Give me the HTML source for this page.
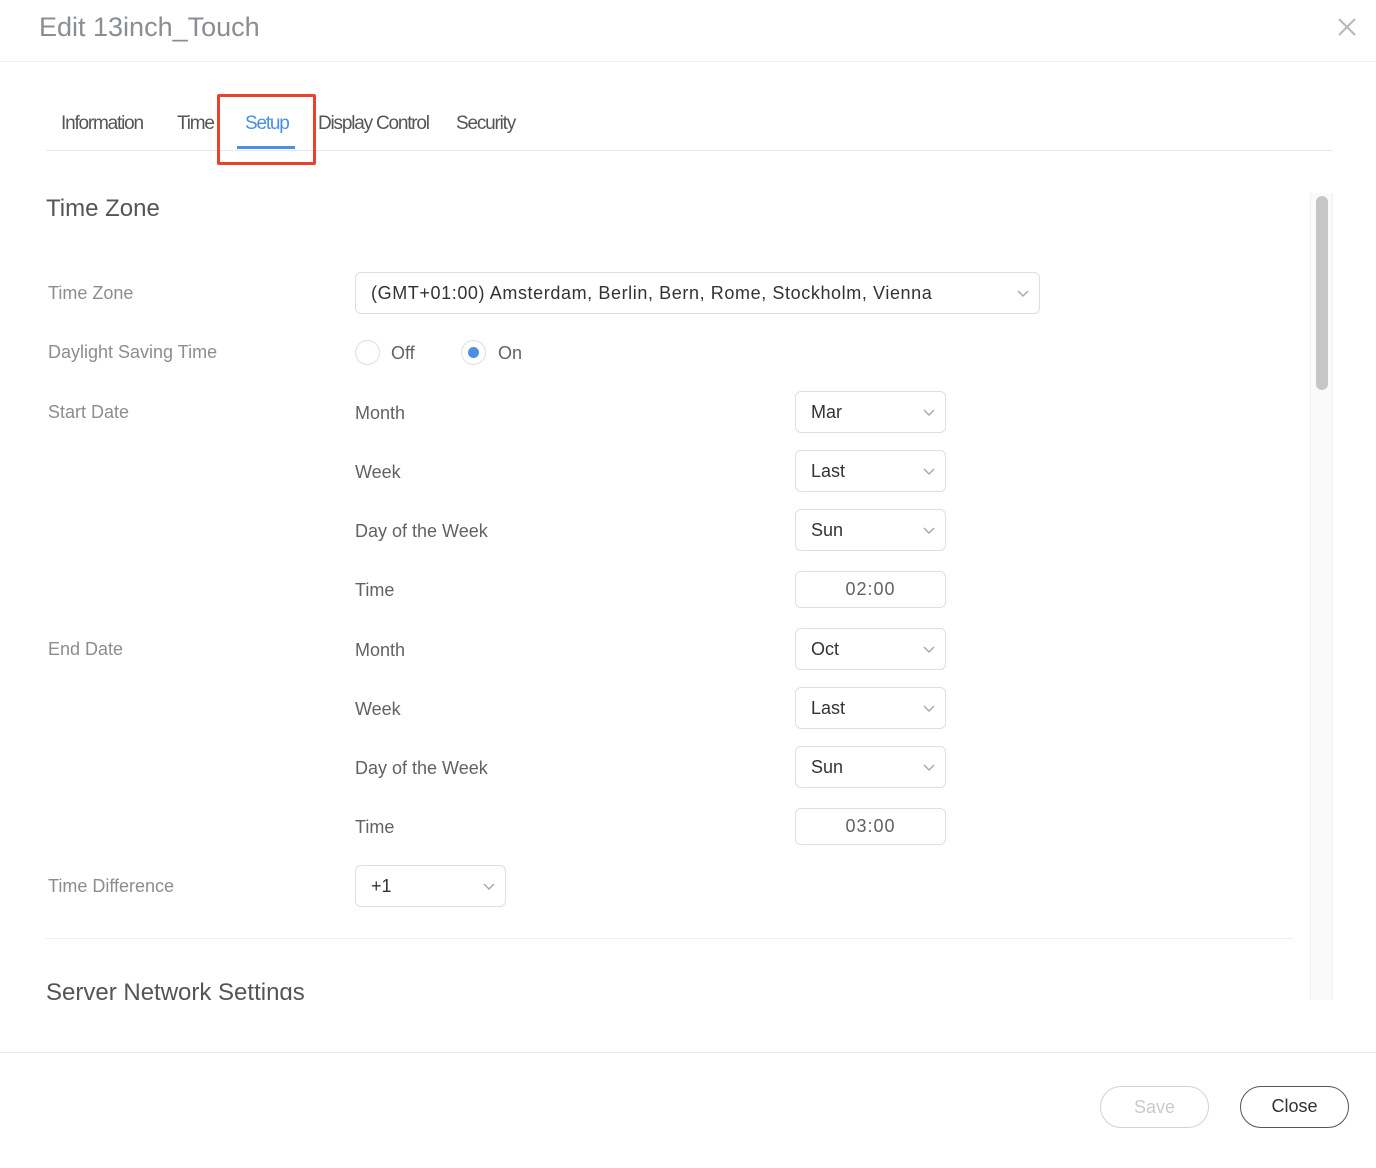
<!DOCTYPE html>
<html><head><meta charset="utf-8"><style>
*{box-sizing:border-box;margin:0;padding:0}
body{width:1376px;height:1168px;background:#fff;font-family:"Liberation Sans",sans-serif;position:relative;overflow:hidden;color:#555}
.a{position:absolute}
.lbl{position:absolute;font-size:18px;color:#8a8d91;line-height:20px}
.sub{position:absolute;left:355px;font-size:18px;color:#606266;line-height:20px}
.sel{position:absolute;left:795px;width:151px;height:42px;border:1px solid #dcdfe6;border-radius:6px;font-size:18px;color:#333;padding-left:15px;line-height:40px}
.sel svg,.tz svg{position:absolute;right:10px;top:17px}
.inp{position:absolute;left:795px;width:151px;height:37px;border:1px solid #dcdfe6;border-radius:6px;font-size:18px;color:#606266;text-align:center;line-height:35px;letter-spacing:1px}
.tab{position:absolute;top:113px;font-size:19px;color:#555;letter-spacing:-1.2px}
</style></head><body>
<div class="a" style="left:39px;top:12px;font-size:27px;color:#8a8d91">Edit 13inch_Touch</div>
<svg class="a" style="left:1338px;top:18px" width="18" height="18"><path d="M1 1L17 17M17 1L1 17" stroke="#b5b8bc" stroke-width="2"/></svg>
<div class="a" style="left:0;top:61px;width:1376px;height:1px;background:#f0f1f3"></div>

<div class="tab" style="left:61px">Information</div>
<div class="tab" style="left:177px">Time</div>
<div class="tab" style="left:245px;color:#4a90e2">Setup</div>
<div class="tab" style="left:318px">Display Control</div>
<div class="tab" style="left:456px">Security</div>
<div class="a" style="left:46px;top:150px;width:1286px;height:1px;background:#e4e7ed"></div>
<div class="a" style="left:237px;top:146px;width:58px;height:3px;background:#4a90e2"></div>
<div class="a" style="left:217px;top:94px;width:99px;height:71px;border:3px solid #e8412c;border-radius:2px"></div>

<div class="a" style="left:1310px;top:193px;width:23px;height:807px;background:#fafafa;border-left:1px solid #eef0f2;border-right:1px solid #eef0f2"></div>
<div class="a" style="left:1316px;top:196px;width:12px;height:194px;background:#c4c6c8;border-radius:6px"></div>

<div class="a" style="left:46px;top:195px;font-size:24px;color:#555">Time Zone</div>

<div class="lbl" style="left:48px;top:283px">Time Zone</div>
<div class="tz a" style="left:355px;top:272px;width:685px;height:42px;border:1px solid #dcdfe6;border-radius:6px;font-size:18px;color:#333;padding-left:15px;line-height:40px;letter-spacing:0.6px">(GMT+01:00) Amsterdam, Berlin, Bern, Rome, Stockholm, Vienna<svg width="12" height="8"><path d="M1 1L6 6L11 1" stroke="#aaa" fill="none" stroke-width="1.5"/></svg></div>

<div class="lbl" style="left:48px;top:342px">Daylight Saving Time</div>
<div class="a" style="left:355px;top:340px;width:25px;height:25px;border:1px solid #dcdfe6;border-radius:50%"></div>
<div class="a" style="left:391px;top:343px;font-size:18px;color:#606266">Off</div>
<div class="a" style="left:461px;top:340px;width:25px;height:25px;border:1px solid #dcdfe6;border-radius:50%"></div>
<div class="a" style="left:468px;top:347px;width:11px;height:11px;background:#4a90e2;border-radius:50%"></div>
<div class="a" style="left:498px;top:343px;font-size:18px;color:#606266">On</div>

<div class="lbl" style="left:48px;top:402px">Start Date</div>
<div class="sub" style="top:403px">Month</div>
<div class="sel" style="top:391px">Mar<svg width="12" height="8"><path d="M1 1L6 6L11 1" stroke="#aaa" fill="none" stroke-width="1.5"/></svg></div>
<div class="sub" style="top:462px">Week</div>
<div class="sel" style="top:450px">Last<svg width="12" height="8"><path d="M1 1L6 6L11 1" stroke="#aaa" fill="none" stroke-width="1.5"/></svg></div>
<div class="sub" style="top:521px">Day of the Week</div>
<div class="sel" style="top:509px">Sun<svg width="12" height="8"><path d="M1 1L6 6L11 1" stroke="#aaa" fill="none" stroke-width="1.5"/></svg></div>
<div class="sub" style="top:580px">Time</div>
<div class="inp" style="top:571px">02:00</div>

<div class="lbl" style="left:48px;top:639px">End Date</div>
<div class="sub" style="top:640px">Month</div>
<div class="sel" style="top:628px">Oct<svg width="12" height="8"><path d="M1 1L6 6L11 1" stroke="#aaa" fill="none" stroke-width="1.5"/></svg></div>
<div class="sub" style="top:699px">Week</div>
<div class="sel" style="top:687px">Last<svg width="12" height="8"><path d="M1 1L6 6L11 1" stroke="#aaa" fill="none" stroke-width="1.5"/></svg></div>
<div class="sub" style="top:758px">Day of the Week</div>
<div class="sel" style="top:746px">Sun<svg width="12" height="8"><path d="M1 1L6 6L11 1" stroke="#aaa" fill="none" stroke-width="1.5"/></svg></div>
<div class="sub" style="top:817px">Time</div>
<div class="inp" style="top:808px">03:00</div>

<div class="lbl" style="left:48px;top:876px">Time Difference</div>
<div class="sel" style="left:355px;top:865px">+1<svg width="12" height="8"><path d="M1 1L6 6L11 1" stroke="#aaa" fill="none" stroke-width="1.5"/></svg></div>

<div class="a" style="left:46px;top:938px;width:1247px;height:1px;background:#eceef1"></div>
<div class="a" style="left:46px;top:976px;width:1250px;height:24px;overflow:hidden"><div style="font-size:24px;color:#555;line-height:33px">Server Network Settings</div></div>

<div class="a" style="left:0;top:1052px;width:1376px;height:1px;background:#e4e7ed"></div>
<div class="a" style="left:1100px;top:1086px;width:109px;height:42px;border:1px solid #d0d2d5;border-radius:21px;text-align:center;line-height:40px;font-size:18px;color:#c8cacc">Save</div>
<div class="a" style="left:1240px;top:1086px;width:109px;height:42px;border:1.5px solid #555;border-radius:21px;text-align:center;line-height:39px;font-size:18px;color:#333">Close</div>
</body></html>
